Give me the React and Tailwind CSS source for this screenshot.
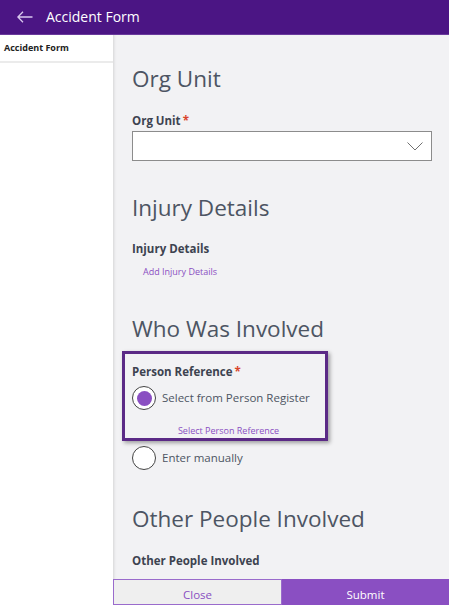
export default function App() {
  const font = { fontFamily: '"Open Sans", "Noto Sans", sans-serif' };
  return (
    <div className="w-[449px] h-[605px] flex flex-col overflow-hidden bg-[#f2f2f4]" style={font}>
      <div className="h-[35px] shrink-0 bg-[#4b1584] border-b border-[#6a3a9c] flex items-center">
        <svg width="16" height="12" viewBox="0 0 16 12" className="ml-[17px]" fill="none" stroke="#d9c8ee" strokeWidth="1.3">
          <path d="M15.5 6H1M6 0.8L0.9 6L6 11.2" />
        </svg>
        <span className="ml-[13px] text-white text-[14px] leading-none">Accident Form</span>
      </div>
      <div className="flex flex-1 min-h-0">
        <div className="w-[113px] shrink-0 bg-white">
          <div className="h-[28px] flex items-center pl-[4px] border-b-2 border-[#ebebeb] text-[9px] font-bold text-[#222]">Accident Form</div>
        </div>
        <div className="flex-1 flex flex-col min-w-0 shadow-[inset_3px_0_3px_-2px_rgba(0,0,0,0.12)]">
          <div className="flex-1 overflow-hidden pl-[19px] pr-[17px]">
            <div className="pt-[30px] text-[22.5px] leading-[28px] text-[#4d5563]">Org Unit</div>
            <div className="mt-[20px] text-[11.5px] font-bold text-[#3d4350] leading-[16px]">Org Unit<span className="text-[#d9442b] ml-[2px]">*</span></div>
            <div className="mt-[2px] h-[30px] bg-white border border-[#8c8c8c] flex items-center justify-end pr-[8px]">
              <svg width="16" height="9" viewBox="0 0 16 9" fill="none" stroke="#707070" strokeWidth="1">
                <path d="M0.5 0.5L8 8L15.5 0.5" />
              </svg>
            </div>
            <div className="mt-[33px] text-[22.5px] leading-[28px] text-[#4d5563]">Injury Details</div>
            <div className="mt-[19px] text-[11.5px] font-bold text-[#3d4350] leading-[16px]">Injury Details</div>
            <div className="mt-[9px] ml-[11px] text-[9px] text-[#8a4fc2] leading-[12px]">Add Injury Details</div>
            <div className="mt-[37px] text-[22.5px] leading-[28px] text-[#4d5563]">Who Was Involved</div>
            <div className="mt-[8px] -ml-[10px] w-[206px] border-[3px] border-[#5b2a86] shadow-[2px_2px_4px_rgba(0,0,0,0.35)] pl-[7px] pt-[10px] pb-[1px]">
              <div className="text-[11.5px] font-bold text-[#3d4350] leading-[16px]">Person Reference<span className="text-[#d9442b] ml-[2px]">*</span></div>
              <div className="mt-[6px] flex items-center">
                <div className="w-[24px] h-[24px] rounded-full border-[1.5px] border-[#444] bg-white flex items-center justify-center">
                  <div className="w-[15px] h-[15px] rounded-full bg-[#8a4fc2]" />
                </div>
                <span className="ml-[6px] text-[11.5px] text-[#4d5563]">Select from Person Register</span>
              </div>
              <div className="mt-[15px] text-center text-[9px] text-[#8a4fc2] leading-[12px]">Select Person Reference</div>
            </div>
            <div className="mt-[5px] flex items-center">
              <div className="w-[24px] h-[24px] rounded-full border-[1.5px] border-[#444] bg-white" />
              <span className="ml-[6px] text-[11.5px] text-[#4d5563]">Enter manually</span>
            </div>
            <div className="mt-[35px] text-[22.5px] leading-[28px] text-[#4d5563]">Other People Involved</div>
            <div className="mt-[20px] text-[11.5px] font-bold text-[#3d4350] leading-[16px]">Other People Involved</div>
          </div>
          <div className="h-[26px] shrink-0 flex">
            <div className="flex-1 bg-[#efefef] border border-[#9a6bcc] flex items-center justify-center pt-[5px] text-[11.5px] text-[#8a4fc2]">Close</div>
            <div className="flex-1 bg-[#8a4fc2] flex items-center justify-center pt-[5px] text-[11.5px] text-white">Submit</div>
          </div>
        </div>
      </div>
    </div>
  );
}
